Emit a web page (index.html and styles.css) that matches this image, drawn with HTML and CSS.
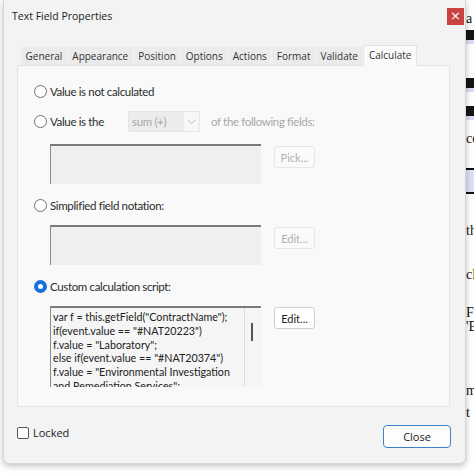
FILE: index.html
```html
<!DOCTYPE html>
<html lang="en">
<head>
    <meta charset="UTF-8">
    <title>Text Field Properties</title>
    <link rel="stylesheet" href="styles.css">
</head>
<body>
    <div class="page-left"></div>

    <div class="dialog">
        <div class="titlebar">
            <span class="title">Text Field Properties</span>
            <span class="close-x">&times;</span>
        </div>

        <div class="tabs">
            <div class="tab">General</div>
            <div class="tab">Appearance</div>
            <div class="tab">Position</div>
            <div class="tab">Options</div>
            <div class="tab">Actions</div>
            <div class="tab">Format</div>
            <div class="tab">Validate</div>
            <div class="tab active">Calculate</div>
        </div>

        <div class="panel">
            <label class="opt first">
                <span class="radio"></span>
                Value is not calculated
            </label>

            <div class="opt sum-row">
                <span class="radio"></span>
                <span class="sum-label">Value is the</span>
                <span class="select">
                    <span class="select-value">sum (+)</span>
                    <span class="select-arrow">
                        <svg width="9" height="6" viewBox="0 0 9 6"><polyline points="1,1 4.5,4.5 8,1" fill="none" stroke="#bbb" stroke-width="1"/></svg>
                    </span>
                </span>
                <span class="muted">of the following fields:</span>
            </div>

            <div class="field-row">
                <div class="box"></div>
                <button class="btn" disabled>Pick...</button>
            </div>

            <label class="opt">
                <span class="radio"></span>
                Simplified field notation:
            </label>

            <div class="field-row">
                <div class="box"></div>
                <button class="btn" disabled>Edit...</button>
            </div>

            <label class="opt">
                <span class="radio checked"></span>
                Custom calculation script:
            </label>

            <div class="field-row">
                <div class="box script">
                    <div class="code">var f = this.getField("ContractName");
if(event.value == "#NAT20223")
f.value = "Laboratory";
else if(event.value == "#NAT20374")
f.value = "Environmental Investigation
and Remediation Services";</div>
                    <div class="scroll"><span class="thumb"></span></div>
                </div>
                <button class="btn enabled">Edit...</button>
            </div>
        </div>

        <div class="footer">
            <label class="locked">
                <span class="checkbox"></span>
                Locked
            </label>
            <button class="close-btn">Close</button>
        </div>
    </div>

    <div class="page-right">
        <div class="doc w1">a</div>
        <div class="doc bar b1"></div>
        <div class="doc bar b2"></div>
        <div class="doc bar b3"></div>
        <div class="doc w2">ce</div>
        <div class="doc band"></div>
        <div class="doc w3">th</div>
        <div class="doc w4">cl</div>
        <div class="doc w5">F<br>'E</div>
        <div class="doc w6">m</div>
        <div class="doc w7">t</div>
    </div>
</body>
</html>
```

FILE: styles.css
```css
body {
    margin: 0;
    padding: 0;
    background: #fff;
    display: flex;
    height: 474px;
    overflow: hidden;
    font-family: 'Lato', 'Open Sans', sans-serif;
    color: #2b2b2b;
}

.page-left {
    width: 3px;
    background: #fff;
}

.page-right {
    width: 8px;
    display: flex;
    flex-direction: column;
    overflow: hidden;
    font-family: 'Liberation Serif', serif;
    font-size: 14px;
    color: #111;
}

/* ---------- dialog ---------- */

.dialog {
    width: 463px;
    height: 464px;
    box-sizing: border-box;
    background: #f3f3f3;
    border: 1px solid #d6d6d6;
    border-top: none;
    border-radius: 0 0 6px 6px;
    box-shadow: 0 2px 6px rgba(0, 0, 0, 0.25);
    display: flex;
    flex-direction: column;
    position: relative;
    z-index: 1;
}

.titlebar {
    height: 46px;
    display: flex;
    justify-content: space-between;
    align-items: flex-start;
    padding: 8px 1px 0 8px;
    box-sizing: border-box;
}

.title {
    font-family: 'Open Sans', sans-serif;
    font-size: 10.5px;
    line-height: 16px;
    color: #1a1a1a;
}

.close-x {
    width: 17px;
    height: 17px;
    background: #c94343;
    color: #fff;
    font-size: 13px;
    line-height: 16px;
    text-align: center;
    font-family: 'DejaVu Sans', sans-serif;
}

.tabs {
    display: flex;
    align-items: flex-end;
    margin-left: 17px;
    height: 19px;
}

.tab {
    height: 18px;
    padding: 0 4.5px;
    margin-right: 1px;
    background: #ebebeb;
    font-family: 'Open Sans', sans-serif;
    font-size: 10px;
    line-height: 18px;
    color: #333;
}

.tab.active {
    height: 20px;
    background: #fafafa;
    border: 1px solid #e4e4e4;
    border-bottom: none;
    margin-bottom: -1px;
    position: relative;
    z-index: 2;
}

.panel {
    margin: 0 15px 0 13px;
    height: 342px;
    box-sizing: border-box;
    background: #f9f9f9;
    border: 1px solid #e4e4e4;
    display: flex;
    flex-direction: column;
    font-size: 11.5px;
    letter-spacing: -0.35px;
}

.opt {
    display: flex;
    align-items: center;
    height: 16px;
    margin: 13px 0 0 16px;
    color: #2b2b2b;
}

.opt.first {
    margin-top: 17px;
}

.radio {
    width: 13px;
    height: 13px;
    box-sizing: border-box;
    border: 1px solid #707070;
    border-radius: 50%;
    background: #fff;
    margin-right: 3px;
}

.radio.checked {
    border: 4px solid #1670dd;
}

.sum-row {
    height: 21px;
    margin-top: 12px;
}

.sum-label {
    width: 78px;
}

.select {
    display: flex;
    width: 72px;
    height: 21px;
    box-sizing: border-box;
    border: 1px solid #e6e6e6;
    margin-right: 11px;
}

.select-value {
    width: 52px;
    background: #ececec;
    color: #a8a8a8;
    padding-left: 3px;
    line-height: 19px;
}

.select-arrow {
    flex: 1;
    display: flex;
    align-items: center;
    justify-content: center;
    background: #f7f7f7;
}

.muted {
    color: #a8a8a8;
}

.field-row {
    display: flex;
    align-items: flex-start;
    margin: 12px 0 0 32px;
}

.box {
    width: 211px;
    height: 40px;
    box-sizing: border-box;
    background: #efefef;
    border-top: 2px solid #7a7a7a;
    border-left: 1px solid #8a8a8a;
    margin-right: 13px;
}

.box.script {
    height: 81px;
    display: flex;
    overflow: hidden;
    background: #f5f5f5;
}

.code {
    flex: 1;
    white-space: pre;
    overflow: hidden;
    font-size: 10.7px;
    letter-spacing: 0;
    line-height: 13.8px;
    padding: 2px 0 0 2px;
    color: #222;
}

.scroll {
    width: 16px;
    border-left: 1px solid #dcdcdc;
    position: relative;
}

.thumb {
    position: absolute;
    left: 6px;
    top: 15px;
    width: 2px;
    height: 18px;
    background: #555;
}

.btn {
    width: 41px;
    height: 22px;
    margin-top: 2px;
    padding: 0;
    font-family: 'Lato', sans-serif;
    font-size: 11px;
    background: #fafafa;
    color: #b0b0b0;
    border: 1px solid #e6e6e6;
    border-radius: 3px;
}

.btn.enabled {
    margin-top: 1px;
    background: #fff;
    color: #222;
    border-color: #cfcfcf;
}

.footer {
    flex: 1;
    display: flex;
    justify-content: space-between;
    align-items: flex-start;
    padding: 0 14px 0 13px;
}

.locked {
    display: flex;
    align-items: center;
    margin-top: 18px;
    font-family: 'Open Sans', sans-serif;
    font-size: 11px;
    color: #222;
}

.checkbox {
    width: 12px;
    height: 12px;
    box-sizing: border-box;
    border: 1px solid #555;
    border-radius: 2px;
    background: #fff;
    margin-right: 4px;
}

.close-btn {
    width: 68px;
    height: 23px;
    margin-top: 18px;
    padding: 0;
    font-family: 'Open Sans', sans-serif;
    font-size: 11px;
    color: #222;
    background: #fdfdfd;
    border: 1px solid #3b82c8;
    border-radius: 4px;
}

/* ---------- document behind the dialog ---------- */

.doc {
    flex: none;
    line-height: 14px;
}

.w1 { margin-top: 12px; height: 14px; }
.bar { height: 10px; background: #151515; border-bottom: 4px solid #d9dcf4; }
.b1 { margin-top: 4px; }
.b2 { margin-top: 34px; }
.b3 { margin-top: 14px; }
.w2 { margin-top: 12px; height: 14px; }
.band { margin-top: 22px; height: 22px; background: #dcdff7; border-top: 2px solid #111; border-bottom: 2px solid #111; }
.w3 { margin-top: 30px; height: 14px; }
.w4 { margin-top: 30px; height: 14px; }
.w5 { margin-top: 24px; height: 28px; }
.w6 { margin-top: 50px; height: 14px; }
.w7 { margin-top: 8px; height: 14px; }
```
